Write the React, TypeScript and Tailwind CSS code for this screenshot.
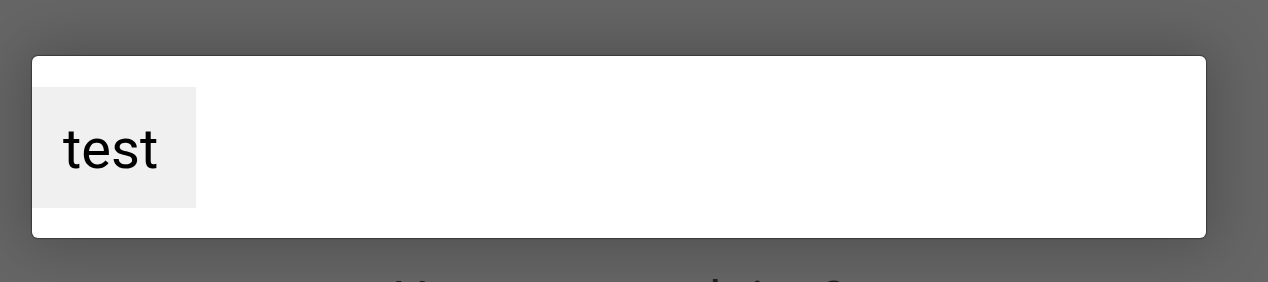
import React from "react";

export default function App() {
    return (
        <div className="h-[282px] w-[1268px] overflow-hidden bg-[#666666] font-['Roboto',sans-serif]">
            <div className="ml-[32px] w-[1174px] pt-[56px]">
                <div className="h-[182px] rounded-[6px] bg-white pt-[31px] shadow-[0_0_1px_1px_rgba(0,0,0,0.35),0_0_60px_10px_rgba(0,0,0,0.22)]">
                    <div className="w-[164px] h-[121px] bg-[#f0f0f0] flex items-center pl-[31px] pt-[2px]">
                        <span className="text-[56px] leading-none text-black">test</span>
                    </div>
                </div>
                <p className="mt-[37px] text-center text-[52px] leading-none text-[#1e1e1e]">
                    How are you doing?
                </p>
            </div>
        </div>
    );
}
